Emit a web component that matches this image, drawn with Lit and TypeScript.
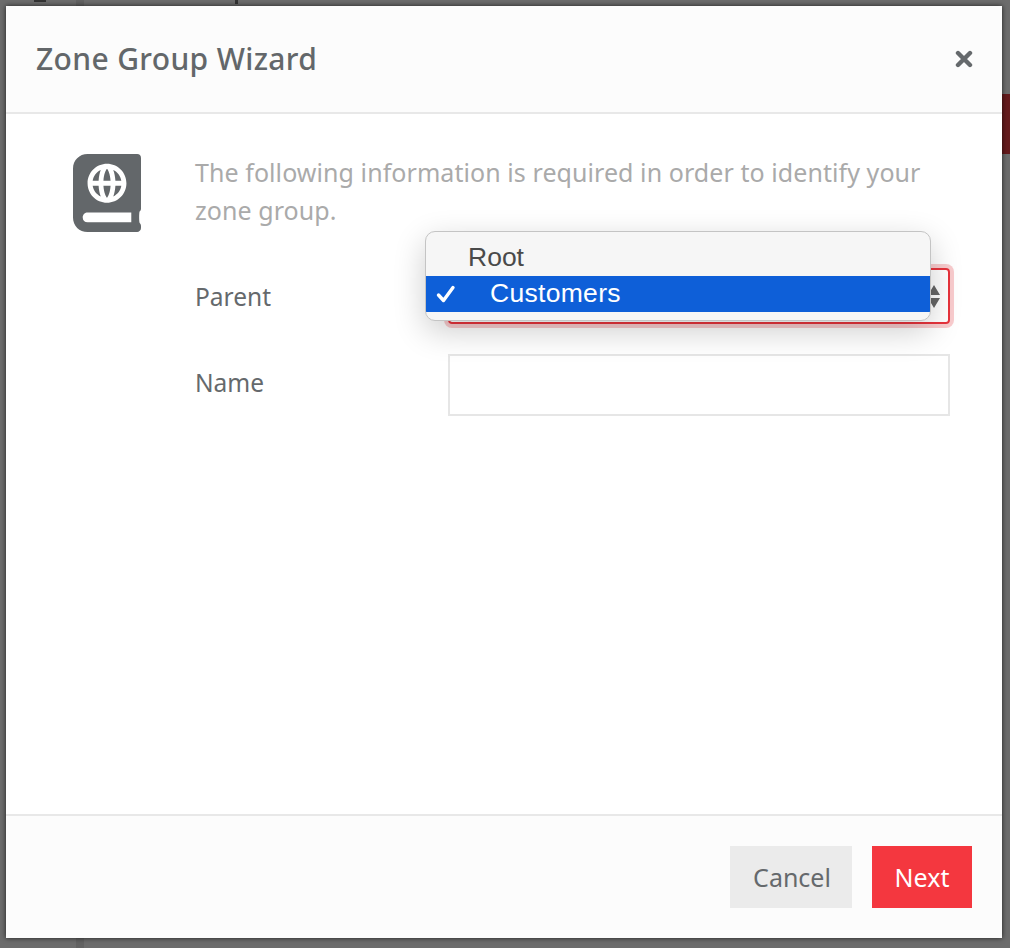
import { LitElement, html, css, svg } from "lit";
import { customElement } from "lit/decorators.js";

const atlas = "M318.38 208h-39.09c-1.49 27.03-6.54 51.35-14.21 70.41 27.71-13.24 48.02-39.19 53.3-70.41zm0-32c-5.28-31.22-25.59-57.17-53.3-70.41 7.68 19.06 12.72 43.38 14.21 70.41h39.09zM224 97.31c-7.69 7.45-20.77 34.42-23.43 78.69h46.87c-2.67-44.26-15.75-71.24-23.44-78.69zm-41.08 8.28c-27.71 13.24-48.02 39.19-53.3 70.41h39.09c1.49-27.03 6.53-51.35 14.21-70.41zm0 172.82c-7.68-19.06-12.72-43.38-14.21-70.41h-39.09c5.28 31.22 25.59 57.17 53.3 70.41zM247.43 208h-46.87c2.66 44.26 15.74 71.24 23.43 78.69 7.7-7.45 20.78-34.43 23.44-78.69zM448 358.4V25.6c0-16-9.6-25.6-25.6-25.6H96C41.6 0 0 41.6 0 96v320c0 54.4 41.6 96 96 96h326.4c12.8 0 25.6-9.6 25.6-25.6v-16c0-6.4-3.2-12.8-9.6-19.2-3.2-16-3.2-60.8 0-73.6 6.4-3.2 9.6-9.6 9.6-19.2zM224 64c70.69 0 128 57.31 128 128s-57.31 128-128 128S96 262.69 96 192 153.31 64 224 64zm160 384H96c-19.2 0-32-12.8-32-32s16-32 32-32h288v64z";

@customElement("app-root")
export class AppRoot extends LitElement {
  static styles = css`
    :host { display: block; height: 948px; background: #6c6c6c; position: relative; overflow: hidden; font-family: "Noto Sans", sans-serif; }
    .page { position: relative; height: 948px; box-sizing: border-box; padding: 6px 8px 10px 6px; display: flex; }
    .strip { position: absolute; right: 0; top: 94px; width: 8px; height: 60px; background: #641a1c; }
    .band { position: absolute; left: 76px; top: 0; bottom: 0; width: 8px; background: #626262; }
    .mark { position: absolute; top: 0; height: 2px; background: #333; }
    .mark.a { left: 34px; width: 12px; }
    .mark.b { left: 235px; width: 3px; height: 4px; }
    .modal { position: relative; flex: 1; display: flex; flex-direction: column; background: #fff; box-shadow: 0 0 5px rgba(0,0,0,.7); }
    .head { box-sizing: border-box; display: flex; align-items: center; justify-content: space-between; padding: 0 29px 0 30px; background: #fcfcfc; border-bottom: 2px solid #e8e8e8; height: 108px; }
    h1 { margin: -2px 0 0; font-size: 30px; font-weight: 500; color: #63676a; letter-spacing: .35px; }
    .close { display: block; width: 18px; height: 18px; }
    .body { flex: 1; display: flex; padding: 40px 52px 0 67px; gap: 54px; }
    .icon { width: 68px; height: 78px; fill: #63676a; flex: none; }
    .content { flex: 1; min-width: 0; }
    p { margin: -1px 0 39px; font-size: 25px; line-height: 38px; color: #aaa; letter-spacing: .07px; }
    .row { display: flex; align-items: center; }
    .row label { width: 253px; flex: none; font-size: 24.5px; color: #65696c; }
    .row.name label { margin-top: -5px; }
    .sel { flex: 1; height: 56px; box-sizing: border-box; border: 2px solid #e8333c; border-radius: 4px; box-shadow: 0 0 0 4px rgba(232,51,60,.25); display: flex; align-items: center; justify-content: flex-end; padding-right: 8px; }
    .inp { flex: 1; height: 62px; box-sizing: border-box; border: 2px solid #e6e6e6; }
    .row + .row { margin-top: 30px; }
    .foot { height: 124px; box-sizing: border-box; background: #fcfcfc; border-top: 2px solid #e8e8e8; display: flex; justify-content: flex-end; gap: 20px; padding: 30px 30px 0 0; }
    .btn { height: 62px; display: flex; align-items: center; justify-content: center; font-size: 25px; }
    .cancel { width: 122px; background: #ebebeb; color: #65696c; padding-left: 2px; box-sizing: border-box; }
    .next { width: 100px; background: #f4373f; color: #fff; }
    .menu { position: absolute; left: 419px; top: 225px; width: 506px; height: 90px; box-sizing: border-box; padding-top: 8px; background: #f6f6f6; border: 1px solid #c4c4c4; border-radius: 10px; box-shadow: 0 10px 32px rgba(0,0,0,.2); font-family: "Liberation Sans", sans-serif; font-size: 26.5px; overflow: hidden; }
    .opt { height: 36px; box-sizing: border-box; padding: 0 0 2px 42px; display: flex; align-items: center; color: #4a4a4a; }
    .opt.on { background: #0e5fd8; color: #fff; padding-left: 64px; position: relative; letter-spacing: .3px; }
    .check { position: absolute; left: 10px; top: 8px; width: 20px; height: 20px; fill: none; stroke: #fff; stroke-width: 3.4; stroke-linecap: round; stroke-linejoin: round; }
  `;
  render() {
    return html`
      <div class="strip"></div>
      <div class="band"></div>
      <div class="mark a"></div>
      <div class="mark b"></div>
      <div class="page">
        <div class="modal">
          <div class="head">
            <h1>Zone Group Wizard</h1>
            <svg class="close" viewBox="0 0 18 18">${svg`<path d="M3 3 15 15M15 3 3 15" stroke="#65696c" stroke-width="4.4" stroke-linecap="round"/>`}</svg>
          </div>
          <div class="body">
            <svg class="icon" viewBox="0 0 448 512" preserveAspectRatio="none">${svg`<path d=${atlas}/>`}</svg>
            <div class="content">
              <p>The following information is required in order to identify your zone group.</p>
              <div class="row">
                <label>Parent</label>
                <div class="sel">
                  <svg width="12" height="23" viewBox="0 0 12 23">${svg`<path d="M6 0 12 10H0zM0 13H12L6 23z" fill="#666"/>`}</svg>
                </div>
              </div>
              <div class="row name">
                <label>Name</label>
                <div class="inp"></div>
              </div>
            </div>
          </div>
          <div class="foot">
            <div class="btn cancel">Cancel</div>
            <div class="btn next">Next</div>
          </div>
          <div class="menu">
            <div class="opt">Root</div>
            <div class="opt on">
              <svg class="check" viewBox="0 0 20 20">${svg`<path d="M2.5 11 7.5 16.5 17 3.5"/>`}</svg>
              Customers
            </div>
          </div>
        </div>
      </div>
    `;
  }
}
